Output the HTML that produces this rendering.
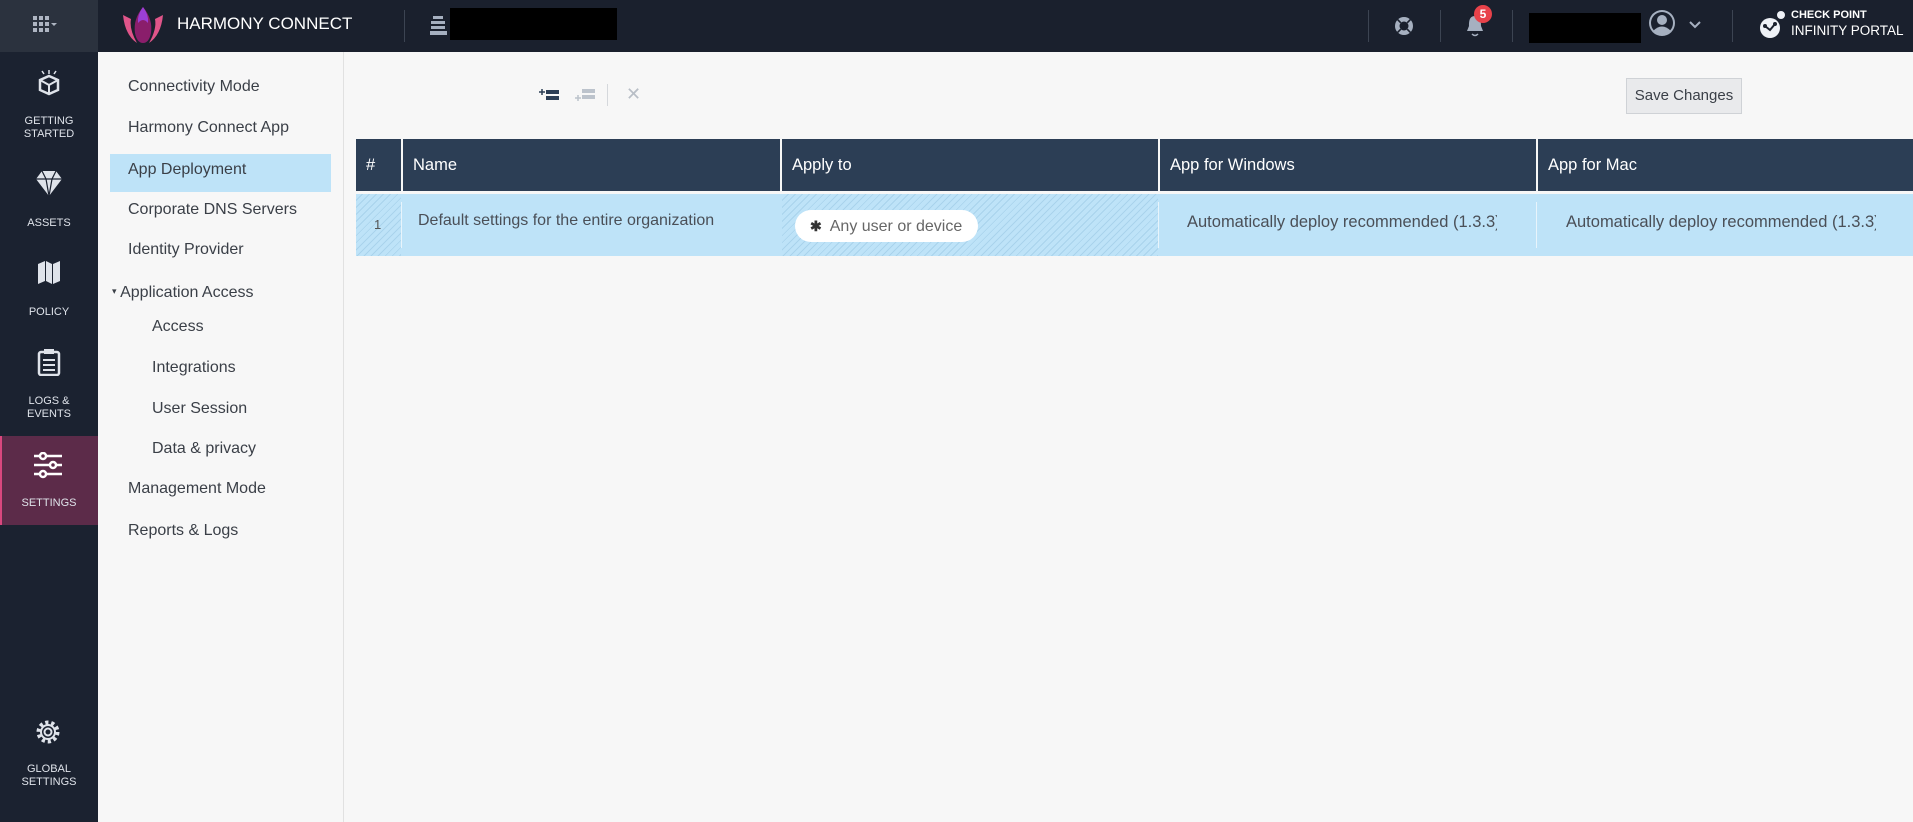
<!DOCTYPE html>
<html><head><meta charset="utf-8"><style>
*{box-sizing:border-box;margin:0;padding:0}
body{width:1913px;height:822px;overflow:hidden;background:#f7f7f7;font-family:"Liberation Sans",sans-serif;position:relative}
.abs{position:absolute}
#top{left:0;top:0;width:1913px;height:52px;background:#1a202d}
#rail{left:0;top:52px;width:98px;height:770px;background:#1b2230}
.ri{position:absolute;left:0;width:98px;text-align:center;color:#dfe3ea;font-size:11px;line-height:13px}
.nav{left:98px;top:52px;width:246px;height:770px;background:#f7f7f7;border-right:1px solid #e1e1e1}
.ni{position:absolute;left:30px;font-size:16px;color:#3a3f47;white-space:nowrap}
.sep{position:absolute;top:10px;width:1px;height:32px;background:#3c4452}
.hd{position:absolute;top:139px;height:52px;background:#2c3e55;color:#fff;font-size:16.5px;line-height:52px;padding-left:10px}
.hatch{background:repeating-linear-gradient(135deg,#bee3f8 0 4px,#a9d3ec 4px 5px)}
</style></head><body>
<div id="top" class="abs">
 <div class="abs" style="left:0;top:0;width:98px;height:52px;background:#2b323e"></div>
 <svg class="abs" style="left:33px;top:16px" width="28" height="18"><g fill="#aeb5c2"><rect x="0" y="0" width="4" height="4"/><rect x="6" y="0" width="4" height="4"/><rect x="12" y="0" width="4" height="4"/><rect x="0" y="6" width="4" height="4"/><rect x="6" y="6" width="4" height="4"/><rect x="12" y="6" width="4" height="4"/><rect x="0" y="12" width="4" height="4"/><rect x="6" y="12" width="4" height="4"/><rect x="12" y="12" width="4" height="4"/><path d="M18 7h6l-3 3z"/></g></svg>
 <svg class="abs" style="left:121px;top:5px" width="44" height="40"><path d="M2 10 Q4 30 16 38 Q8 24 10 14Z" fill="#e0558a"/><path d="M42 10 Q40 30 28 38 Q36 24 34 14Z" fill="#e0558a"/><path d="M22 2 Q12 14 14 28 Q16 38 22 38 Q28 38 30 28 Q32 14 22 2Z" fill="#8a1e6b"/><path d="M22 2 Q16 10 17 18 Q22 12 27 18 Q28 10 22 2Z" fill="#9b3fd6"/></svg>
 <div class="abs" style="left:177px;top:14px;color:#fff;font-size:17px">HARMONY CONNECT</div>
 <div class="sep" style="left:404px"></div>
 <svg class="abs" style="left:430px;top:14px" width="18" height="22"><g fill="#a6b0c0"><rect x="3" y="2" width="10" height="3"/><rect x="1" y="7" width="14" height="3"/><rect x="1" y="12" width="14" height="3"/><rect x="0" y="17" width="17" height="4"/></g></svg>
 <div class="abs" style="left:450px;top:8px;width:167px;height:32px;background:#000"></div>
 <div class="sep" style="left:1368px"></div>
 <svg class="abs" style="left:1393px;top:15px" width="22" height="22"><circle cx="11" cy="11" r="9" fill="#a6b0c0"/><circle cx="11" cy="11" r="4.5" fill="#1a202d"/><g stroke="#1a202d" stroke-width="1.6"><path d="M4.6 4.6L7.8 7.8M17.4 4.6L14.2 7.8M4.6 17.4L7.8 14.2M17.4 17.4L14.2 14.2"/></g></svg>
 <div class="sep" style="left:1440px"></div>
 <svg class="abs" style="left:1464px;top:12px" width="22" height="26"><path d="M11 4 C5 4 5 10 5 14 L3 19 H19 L17 14 C17 10 17 4 11 4Z" fill="#a6b0c0"/><path d="M8 22 Q11 25 14 22" stroke="#a6b0c0" fill="none" stroke-width="1.5"/></svg>
 <div class="abs" style="left:1474px;top:5px;width:18px;height:18px;border-radius:50%;background:#e8424a;color:#fff;font-size:12px;font-weight:bold;text-align:center;line-height:18px">5</div>
 <div class="sep" style="left:1512px"></div>
 <div class="abs" style="left:1529px;top:13px;width:112px;height:30px;background:#000"></div>
 <svg class="abs" style="left:1647px;top:8px" width="30" height="30"><circle cx="15" cy="15" r="13" fill="#a6b0c0"/><circle cx="15" cy="15" r="11" fill="#1a202d"/><circle cx="15" cy="12" r="5" fill="#a6b0c0"/><path d="M6 23 Q15 14 24 23 Q15 30 6 23Z" fill="#a6b0c0"/></svg>
 <svg class="abs" style="left:1688px;top:20px" width="14" height="10"><path d="M2 2l5 5 5-5" stroke="#a6b0c0" stroke-width="2" fill="none"/></svg>
 <div class="sep" style="left:1732px"></div>
 <svg class="abs" style="left:1758px;top:10px" width="28" height="30"><circle cx="12" cy="18" r="10" fill="#eef1f6"/><circle cx="23" cy="5" r="4" fill="#eef1f6"/><path d="M7 16l5 4 5-6" stroke="#1a202d" stroke-width="2" fill="none"/><circle cx="7" cy="16" r="2" fill="#1a202d"/><circle cx="17" cy="14" r="2" fill="#1a202d"/></svg>
 <div class="abs" style="left:1791px;top:9px;color:#fff;font-size:11px;font-weight:bold">CHECK POINT</div>
 <div class="abs" style="left:1791px;top:23px;color:#fff;font-size:13.5px">INFINITY PORTAL</div>
</div>
<div id="rail" class="abs">
 <svg class="abs" style="left:34px;top:16px" width="30" height="30"><path d="M6 12 L15 8 L24 12 L24 22 L15 26 L6 22Z" fill="none" stroke="#dfe3ea" stroke-width="2.5"/><path d="M6 12 L15 17 L24 12 M15 17 V26" stroke="#dfe3ea" stroke-width="2" fill="none"/><path d="M15 2v4 M22 3l-2 3 M8 3l2 3" stroke="#dfe3ea" stroke-width="1.5"/></svg>
 <div class="ri" style="top:63px">GETTING<br>STARTED</div>
 <svg class="abs" style="left:34px;top:117px" width="30" height="28"><path d="M8 2H22L28 10L15 27L2 10Z" fill="#dfe3ea"/><path d="M2 10H28 M8 2L12 10L15 27L18 10L22 2" stroke="#1b2230" stroke-width="1.2" fill="none"/></svg>
 <div class="ri" style="top:165px">ASSETS</div>
 <svg class="abs" style="left:36px;top:207px" width="26" height="26"><path d="M2 5L9 2V22L2 25Z M10 2L16 5V25L10 22Z M17 5L24 2V22L17 25Z" fill="#dfe3ea"/></svg>
 <div class="ri" style="top:254px">POLICY</div>
 <svg class="abs" style="left:37px;top:296px" width="24" height="28"><rect x="2" y="4" width="20" height="23" rx="2" fill="none" stroke="#dfe3ea" stroke-width="2.5"/><rect x="7" y="1" width="10" height="5" fill="#dfe3ea"/><path d="M6 12H18M6 17H18M6 22H18" stroke="#dfe3ea" stroke-width="2"/></svg>
 <div class="ri" style="top:343px">LOGS &amp;<br>EVENTS</div>
 <div class="abs" style="left:0;top:384px;width:98px;height:89px;background:#5c2b49;border-left:2px solid #d9477e"></div>
 <svg class="abs" style="left:32px;top:400px" width="32" height="28"><g stroke="#fff" stroke-width="2.5"><path d="M2 4H8M14 4H30M2 13H18M24 13H30M2 22H8M14 22H30"/></g><g fill="none" stroke="#fff" stroke-width="2.5"><circle cx="11" cy="4" r="3"/><circle cx="21" cy="13" r="3"/><circle cx="11" cy="22" r="3"/></g></svg>
 <div class="ri" style="top:445px">SETTINGS</div>
 <svg class="abs" style="left:34px;top:666px" width="28" height="28"><circle cx="14" cy="14" r="9" fill="none" stroke="#dfe3ea" stroke-width="5" stroke-dasharray="3 2.65"/><circle cx="14" cy="14" r="7" fill="none" stroke="#dfe3ea" stroke-width="2"/><circle cx="14" cy="14" r="3.5" fill="none" stroke="#dfe3ea" stroke-width="2"/></svg>
 <div class="ri" style="top:711px">GLOBAL<br>SETTINGS</div>
</div>
<div class="nav abs">
 <div class="abs" style="left:12px;top:102px;width:221px;height:38px;background:#bee3f8"></div>
 <div class="ni" style="top:26px">Connectivity Mode</div>
 <div class="ni" style="top:67px">Harmony Connect App</div>
 <div class="ni" style="top:109px">App Deployment</div>
 <div class="ni" style="top:149px">Corporate DNS Servers</div>
 <div class="ni" style="top:189px">Identity Provider</div>
 <div class="ni" style="left:14px;top:232px"><span style="font-size:9px;vertical-align:3px">▾</span> Application Access</div>
 <div class="ni" style="left:54px;top:266px">Access</div>
 <div class="ni" style="left:54px;top:307px">Integrations</div>
 <div class="ni" style="left:54px;top:348px">User Session</div>
 <div class="ni" style="left:54px;top:388px">Data &amp; privacy</div>
 <div class="ni" style="top:428px">Management Mode</div>
 <div class="ni" style="top:470px">Reports &amp; Logs</div>
</div>
<svg class="abs" style="left:538px;top:88px" width="22" height="14"><path d="M1 4H7M4 1V7" stroke="#2c3e55" stroke-width="1.5"/><rect x="8" y="2" width="13" height="4" fill="#2c3e55"/><rect x="8" y="8" width="13" height="4" fill="#2c3e55"/></svg>
<svg class="abs" style="left:574px;top:88px" width="22" height="14"><path d="M1 10H7M4 7V13" stroke="#bcc3cc" stroke-width="1.5"/><rect x="8" y="1" width="13" height="4" fill="#bcc3cc"/><rect x="8" y="7" width="13" height="4" fill="#bcc3cc"/></svg>
<div class="abs" style="left:607px;top:84px;width:1px;height:22px;background:#d5d8dc"></div>
<div class="abs" style="left:626px;top:84px;color:#b8bec6;font-size:18px">✕</div>
<div class="abs" style="left:1626px;top:78px;width:116px;height:36px;background:#e9eaec;border:1px solid #cfd2d6;font-size:15px;color:#3a3f47;text-align:center;line-height:34px">Save Changes</div>
<div class="hd" style="left:356px;width:45px">#</div>
<div class="hd" style="left:403px;width:377px">Name</div>
<div class="hd" style="left:782px;width:376px">Apply to</div>
<div class="hd" style="left:1160px;width:376px">App for Windows</div>
<div class="hd" style="left:1538px;width:375px">App for Mac</div>
<div class="abs" style="left:356px;top:194px;width:1557px;height:62px;background:#bee3f8"></div>
<div class="abs hatch" style="left:356px;top:194px;width:45px;height:62px"></div>
<div class="abs hatch" style="left:782px;top:194px;width:376px;height:62px"></div>
<div class="abs" style="left:401px;top:202px;width:1px;height:46px;background:#e8f4fb"></div>
<div class="abs" style="left:1158px;top:202px;width:1px;height:46px;background:#e8f4fb"></div>
<div class="abs" style="left:1536px;top:202px;width:1px;height:46px;background:#e8f4fb"></div>
<div class="abs" style="left:374px;top:217px;font-size:13px;color:#555">1</div>
<div class="abs" style="left:418px;top:212px;font-size:16px;color:#4a4f57">Default settings for the entire organization</div>
<div class="abs" style="left:795px;top:210px;width:183px;height:32px;background:#fff;border-radius:16px;font-size:16px;color:#666;line-height:32px;padding-left:15px"><b style="color:#333;font-size:14px">✱</b>&nbsp; Any user or device</div>
<div class="abs" style="left:1187px;top:213px;width:310px;overflow:hidden;white-space:nowrap;font-size:16.5px;color:#4a4f57">Automatically deploy recommended (1.3.3)</div>
<div class="abs" style="left:1566px;top:213px;width:310px;overflow:hidden;white-space:nowrap;font-size:16.5px;color:#4a4f57">Automatically deploy recommended (1.3.3)</div>
</body></html>
